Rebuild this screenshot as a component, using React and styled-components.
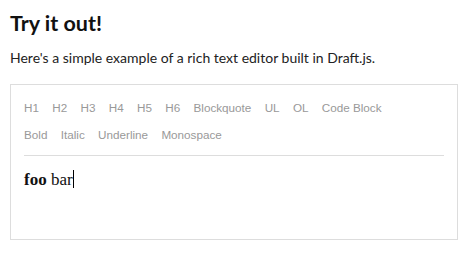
import styled, { createGlobalStyle } from "styled-components";

const GlobalStyle = createGlobalStyle`
  body {
    margin: 0;
    background: #fff;
  }
`;

const BLOCK_TYPES = ["H1", "H2", "H3", "H4", "H5", "H6", "Blockquote", "UL", "OL", "Code Block"];
const INLINE_STYLES = ["Bold", "Italic", "Underline", "Monospace"];

const App = () => {
  return (
    <>
      <GlobalStyle />
      <Page>
        <Title>Try it out!</Title>
        <Intro>Here's a simple example of a rich text editor built in Draft.js.</Intro>
        <EditorRoot>
          <Controls>
            {BLOCK_TYPES.map((label) => (
              <StyleButton key={label}>{label}</StyleButton>
            ))}
          </Controls>
          <Controls>
            {INLINE_STYLES.map((label) => (
              <StyleButton key={label}>{label}</StyleButton>
            ))}
          </Controls>
          <Editor>
            <b>foo</b> bar<Caret />
          </Editor>
        </EditorRoot>
      </Page>
    </>
  );
};

export default App;

const Page = styled.div`
  padding: 8px 16px 0 10px;
  font-family: Lato, "Open Sans", sans-serif;
  color: #111;
`;

const Title = styled.h1`
  margin: 0;
  font-size: 21.5px;
  line-height: 30px;
  font-weight: 700;
  color: #111;
`;

const Intro = styled.p`
  margin: 10px 0 0;
  font-size: 14px;
  line-height: 20px;
  color: #222;
`;

const EditorRoot = styled.div`
  margin-top: 16px;
  border: 1px solid #ddd;
  padding: 9px 13px 0;
  height: 145px;
  font-family: "Liberation Serif", serif;
`;

const Controls = styled.div`
  display: flex;
  font-family: "Liberation Sans", Arial, sans-serif;
  font-size: 11.7px;
  line-height: 27px;
`;

const StyleButton = styled.span`
  color: #999;
  margin-right: 13.3px;
  cursor: pointer;
`;

const Editor = styled.div`
  border-top: 1px solid #ddd;
  margin-top: 7px;
  padding-top: 14px;
  font-size: 17px;
  line-height: 20px;
  color: #111;
  cursor: text;
`;

const Caret = styled.span`
  display: inline-block;
  width: 1px;
  height: 18px;
  background: #000;
  vertical-align: -3px;
`;
